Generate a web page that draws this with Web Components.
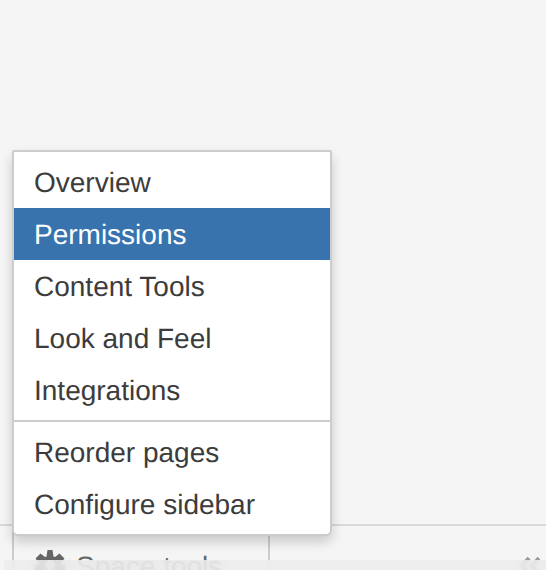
<!DOCTYPE html>
<html>
<head>
<meta charset="utf-8">
<title>Space tools</title>
<style>
    html, body { margin: 0; height: 100%; overflow: hidden; background: #f5f5f5; }
</style>
</head>
<body>
<sidebar-page>
    <space-menu slot="menu">
        <menu-item>Overview</menu-item>
        <menu-item active>Permissions</menu-item>
        <menu-item>Content Tools</menu-item>
        <menu-item>Look and Feel</menu-item>
        <menu-item>Integrations</menu-item>
        <menu-divider></menu-divider>
        <menu-item>Reorder pages</menu-item>
        <menu-item>Configure sidebar</menu-item>
    </space-menu>
    <sidebar-footer slot="footer">Space tools</sidebar-footer>
</sidebar-page>

<script>
// 页面外框：菜单浮在底栏上方
class SidebarPage extends HTMLElement {
    constructor() {
        super();
        this.attachShadow({ mode: 'open' });
        this.shadowRoot.innerHTML = `
            <style>
                :host {
                    display: flex;
                    flex-direction: column;
                    position: relative;
                    width: 546px;
                    height: 570px;
                    overflow: hidden;
                    background: #f5f5f5;
                    font-family: "Liberation Sans", Arial, sans-serif;
                    color: #333;
                    text-rendering: geometricPrecision;
                }
                .spacer { height: 524px; flex: none; }
                .menu { position: absolute; left: 12px; top: 150px; z-index: 2; }
                .fade {
                    position: absolute;
                    left: 4px;
                    right: 0;
                    top: 560px;
                    height: 10px;
                    z-index: 3;
                    background: rgba(236, 236, 236, 0.85);
                    -webkit-backdrop-filter: blur(6px);
                    backdrop-filter: blur(6px);
                    border-radius: 4px 0 0 0;
                }
            </style>
            <div class="spacer"></div>
            <slot name="footer"></slot>
            <div class="menu"><slot name="menu"></slot></div>
            <div class="fade"></div>
        `;
    }
}

class SpaceMenu extends HTMLElement {
    constructor() {
        super();
        this.attachShadow({ mode: 'open' });
        this.shadowRoot.innerHTML = `
            <style>
                :host {
                    display: block;
                    box-sizing: border-box;
                    width: 320px;
                    height: 386px;
                    padding: 4px 0;
                    background: #fff;
                    border: 2px solid #cccccc;
                    border-radius: 2px 2px 6px 6px;
                    box-shadow: 0 6px 12px rgba(0, 0, 0, 0.175);
                }
            </style>
            <slot></slot>
        `;
    }
}

class MenuItem extends HTMLElement {
    constructor() {
        super();
        this.attachShadow({ mode: 'open' });
        this.shadowRoot.innerHTML = `
            <style>
                :host {
                    display: block;
                    height: 52px;
                    padding: 0 20px;
                    font-size: 28px;
                    line-height: 54px;
                    color: #3c3c3c;
                    white-space: nowrap;
                }
                :host([active]) {
                    background: #3873ae;
                    color: #fff;
                }
            </style>
            <slot></slot>
        `;
    }
}

class MenuDivider extends HTMLElement {
    constructor() {
        super();
        this.attachShadow({ mode: 'open' });
        this.shadowRoot.innerHTML = `
            <style>
                :host {
                    display: block;
                    height: 2px;
                    margin: 4px 0;
                    background: #cccccc;
                }
            </style>
        `;
    }
}

class SidebarFooter extends HTMLElement {
    constructor() {
        super();
        this.attachShadow({ mode: 'open' });
        this.shadowRoot.innerHTML = `
            <style>
                :host {
                    display: flex;
                    flex: none;
                    align-items: flex-start;
                    justify-content: space-between;
                    height: 44px;
                    padding-left: 12px;
                    border-top: 2px solid #d9d9d9;
                    font-size: 28px;
                    color: #666;
                }
                .tools {
                    display: flex;
                    align-items: flex-start;
                    gap: 11px;
                    box-sizing: border-box;
                    width: 258px;
                    height: 60px;
                    padding: 24px 0 0 21px;
                    border: 2px solid #cccccc;
                    border-top: 0;
                    white-space: nowrap;
                    line-height: 32px;
                }
                .tools span { margin-top: 1px; }
                svg.gear { width: 30px; height: 30px; flex: none; fill: #666; }
                svg.collapse {
                    width: 20px;
                    height: 20px;
                    margin: 30px 6px 0 0;
                    fill: none;
                    stroke: #999;
                    stroke-width: 4;
                    flex: none;
                }
            </style>
            <div class="tools">
                <svg class="gear" viewBox="0 0 30 30" aria-hidden="true">
                    <path fill-rule="evenodd" d="M12.500 0h5l1 6.500 1.500.6 4.500-3.600 5 5-3.600 4.500.6 1.500 6.500 1v5l-6.500 1-.6 1.500 3.600 4.500-5 5-4.500-3.600-1.500.6-1 6.500h-5l-1-6.500-1.500-.6-4.500 3.600-5-5 3.600-4.500-.6-1.500-6.500-1v-5l6.500-1 .6-1.500-3.600-4.500 5-5 4.500 3.600 1.500-.6zM15 10a5 5 0 1 0 0 10 5 5 0 0 0 0-10z"/>
                </svg>
                <span><slot></slot></span>
            </div>
            <svg class="collapse" viewBox="0 0 20 20" aria-hidden="true">
                <path d="M9 2L2 10l7 8M19 2l-7 8 7 8"/>
            </svg>
        `;
    }
}

customElements.define('sidebar-page', SidebarPage);
customElements.define('space-menu', SpaceMenu);
customElements.define('menu-item', MenuItem);
customElements.define('menu-divider', MenuDivider);
customElements.define('sidebar-footer', SidebarFooter);
</script>
</body>
</html>
